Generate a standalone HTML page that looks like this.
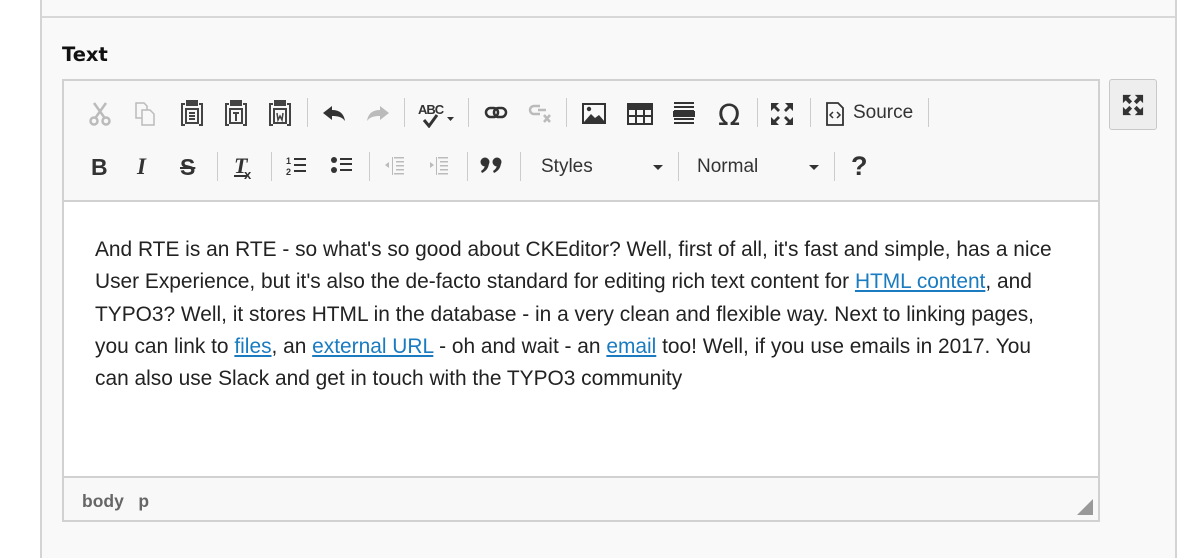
<!DOCTYPE html>
<html><head><meta charset="utf-8"><style>
*{margin:0;padding:0;box-sizing:border-box}
body{width:1200px;height:551px;overflow:hidden;background:#fff;font-family:"Liberation Sans",Arial,sans-serif;position:relative}
.panel{position:absolute;left:40px;top:-2px;width:1137px;height:560px;background:#f9f9f9;border-left:2px solid #d4d4d4;border-right:2px solid #d4d4d4}
.hl{position:absolute;left:42px;top:16px;width:1133px;height:2px;background:#d8d8d8}
.label{position:absolute;left:62px;top:43px;font-family:"DejaVu Sans",sans-serif;font-weight:bold;font-size:19.5px;color:#111}
.ed{position:absolute;left:62px;top:79px;width:1038px;height:443px;border:2px solid #d1d1d1;background:#f8f8f8}
.tb{position:absolute;left:0;top:0;width:100%;height:121px;border-bottom:2px solid #d1d1d1;background:#f8f8f8}
.content{position:absolute;left:0;top:121px;width:100%;height:276px;background:#fff;border-bottom:2px solid #d1d1d1;padding:32px 0 0 31px;font-size:20.9px;line-height:32.3px;color:#222;white-space:nowrap}
.content a{color:#1a7bc1;text-decoration:underline}
.bot{position:absolute;left:18px;top:410px;font-weight:bold;font-size:17.5px;color:#666}
.ic{position:absolute}
.sep{position:absolute;width:1px;height:29px;background:#ccc}
.t{position:absolute;font-size:19px;color:#333}
.max{position:absolute;left:1109px;top:79px;width:48px;height:51px;border:1px solid #c8c8c8;border-radius:3px;background:#eee}
</style></head><body>
<div class="panel"></div>
<div class="hl"></div>
<div class="label">Text</div>
<div class="ed">
 <div class="tb">
  <svg class="ic" style="left:24px;top:20px" width="24" height="26" viewBox="0 0 24 26" fill="none" stroke="#bbb" stroke-width="2.5"><path d="M6 2l10 14M18 2L8 16"/><circle cx="6" cy="20" r="3.5"/><circle cx="18" cy="20" r="3.5"/></svg>
  <svg class="ic" style="left:70px;top:20px" width="22" height="26" viewBox="0 0 22 26" fill="none" stroke="#bbb" stroke-width="1.5"><path d="M2 2h8l3 3v12H2z"/><path d="M8 9h8l4 4v11H8z" fill="#f8f8f8"/></svg>
  <svg class="ic" style="left:116px;top:18px" width="24" height="28" viewBox="0 0 24 28" fill="none" stroke="#444" stroke-width="2"><path d="M5 5H2v21h3M19 5h3v21h-3"/><rect x="7" y="2" width="10" height="4" fill="#444"/><rect x="6" y="10" width="12" height="14"/><path d="M9 14h6M9 17h6M9 20h6"/></svg>
  <svg class="ic" style="left:160px;top:18px" width="24" height="28" viewBox="0 0 24 28" fill="none" stroke="#444" stroke-width="2"><path d="M5 5H2v21h3M19 5h3v21h-3"/><rect x="7" y="2" width="10" height="4" fill="#444"/><rect x="6" y="10" width="12" height="14"/><path d="M9 14h6M12 14v8"/></svg>
  <svg class="ic" style="left:204px;top:18px" width="24" height="28" viewBox="0 0 24 28" fill="none" stroke="#444" stroke-width="2"><path d="M5 5H2v21h3M19 5h3v21h-3"/><rect x="7" y="2" width="10" height="4" fill="#444"/><rect x="6" y="10" width="12" height="14"/><path d="M9 14l1 7 2-4 2 4 1-7" stroke-width="1.5"/></svg>
  <div class="sep" style="left:243px;top:17px"></div>
  <svg class="ic" style="left:258px;top:24px" width="24" height="18" viewBox="0 0 24 18"><path d="M1 8l9-7v4c8 0 12 4 13 11-3-4-7-5-13-5v4z" fill="#333"/></svg>
  <svg class="ic" style="left:302px;top:24px" width="24" height="18" viewBox="0 0 24 18"><path d="M23 8l-9-7v4C6 5 2 9 1 16c3-4 7-5 13-5v4z" fill="#bbb"/></svg>
  <div class="sep" style="left:340px;top:17px"></div>
  <div class="t" style="left:354px;top:21px;font-size:13px;font-weight:bold;color:#333;letter-spacing:-1px">ABC</div>
  <svg class="ic" style="left:358px;top:33px" width="36" height="14" viewBox="0 0 36 14"><path d="M2 6l5 6 8-11" stroke="#333" stroke-width="3" fill="none"/><path d="M25 3h7l-3.5 4z" fill="#333"/></svg>
  <div class="sep" style="left:404px;top:17px"></div>
  <svg class="ic" style="left:420px;top:24px" width="24" height="16" viewBox="0 0 24 16" fill="none" stroke="#333" stroke-width="2.5"><rect x="2" y="3" width="12" height="9" rx="4.5"/><rect x="10" y="3" width="12" height="9" rx="4.5"/></svg>
  <svg class="ic" style="left:464px;top:22px" width="26" height="22" viewBox="0 0 26 22" fill="none" stroke="#bbb" stroke-width="2.5"><path d="M12 3H6a4 4 0 000 8h6M10 7h8"/><path d="M16 12l6 7M22 12l-6 7"/></svg>
  <div class="sep" style="left:502px;top:17px"></div>
  <svg class="ic" style="left:518px;top:22px" width="24" height="21" viewBox="0 0 24 21"><rect x="1" y="1" width="22" height="19" fill="none" stroke="#333" stroke-width="2"/><path d="M2 19l7-8 4 4 4-3 6 7z" fill="#333"/><circle cx="7" cy="6" r="2.2" fill="#333"/></svg>
  <svg class="ic" style="left:563px;top:22px" width="26" height="22" viewBox="0 0 26 22" fill="none" stroke="#333" stroke-width="2"><rect x="1" y="1" width="24" height="20"/><rect x="1" y="1" width="24" height="5" fill="#333"/><path d="M1 13h24M9 6v15M17 6v15"/></svg>
  <svg class="ic" style="left:608px;top:20px" width="24" height="26" viewBox="0 0 24 26" stroke="#333" stroke-width="2"><path d="M2 2h20M2 6h20M2 10h20M2 14h20M2 18h20M2 22h20"/><rect x="2" y="11" width="20" height="4" fill="#333"/></svg>
  <div class="t" style="left:654px;top:17px;font-size:29px;color:#333;font-family:'DejaVu Sans',sans-serif">Ω</div>
  <div class="sep" style="left:693px;top:17px"></div>
  <svg class="ic" style="left:706px;top:21px" width="24" height="24" viewBox="0 0 24 24" fill="#333"><path d="M1 1h8L6 4l4 4-2 2-4-4-3 3zM23 1v8l-3-3-4 4-2-2 4-4-3-3zM1 23v-8l3 3 4-4 2 2-4 4 3 3zM23 23h-8l3-3-4-4 2-2 4 4 3-3z"/></svg>
  <div class="sep" style="left:746px;top:17px"></div>
  <svg class="ic" style="left:761px;top:21px" width="20" height="24" viewBox="0 0 20 24" fill="none" stroke="#333" stroke-width="1.8"><path d="M2 1h11l5 5v17H2z"/><path d="M8 10l-3 3 3 3M12 10l3 3-3 3" stroke-width="1.5"/></svg>
  <div class="t" style="left:789px;top:21px">Source</div>
  <div class="sep" style="left:864px;top:17px"></div>
  <div class="t" style="left:27px;top:73px;font-size:23px;font-weight:bold">B</div>
  <div class="t" style="left:73px;top:73px;font-size:23px;font-weight:bold;font-style:italic;font-family:'Liberation Serif',serif">I</div>
  <div class="t" style="left:116px;top:73px;font-size:23px;font-weight:bold;text-decoration:line-through">S</div>
  <div class="sep" style="left:153px;top:71px"></div>
  <div class="t" style="left:170px;top:72px;font-size:22px;font-weight:bold;font-style:italic;font-family:'Liberation Serif',serif;text-decoration:underline">T</div>
  <div class="t" style="left:180px;top:86px;font-size:13px;font-weight:bold">x</div>
  <div class="sep" style="left:207px;top:71px"></div>
  <svg class="ic" style="left:222px;top:74px" width="22" height="22" viewBox="0 0 22 22" fill="#333"><text x="0" y="9" font-size="9" font-family="Liberation Sans" font-weight="bold">1</text><text x="0" y="20" font-size="9" font-family="Liberation Sans" font-weight="bold">2</text><rect x="8" y="3" width="12" height="2"/><rect x="8" y="9" width="12" height="2"/><rect x="8" y="15" width="12" height="2"/></svg>
  <svg class="ic" style="left:266px;top:74px" width="24" height="22" viewBox="0 0 24 22" fill="#333"><circle cx="4" cy="5" r="3"/><circle cx="4" cy="15" r="3"/><rect x="10" y="3" width="12" height="2"/><rect x="10" y="8" width="12" height="2"/><rect x="10" y="14" width="12" height="2"/></svg>
  <div class="sep" style="left:305px;top:71px"></div>
  <svg class="ic" style="left:320px;top:74px" width="22" height="22" viewBox="0 0 22 22" fill="#bbb"><rect x="10" y="2" width="10" height="1.5"/><rect x="12" y="6" width="8" height="1.5"/><rect x="12" y="10" width="8" height="1.5"/><rect x="12" y="14" width="8" height="1.5"/><rect x="10" y="18" width="10" height="1.5"/><rect x="8" y="2" width="1" height="18"/><path d="M1 10l4-3v6z"/></svg>
  <svg class="ic" style="left:364px;top:74px" width="22" height="22" viewBox="0 0 22 22" fill="#bbb"><rect x="10" y="2" width="10" height="1.5"/><rect x="12" y="6" width="8" height="1.5"/><rect x="12" y="10" width="8" height="1.5"/><rect x="12" y="14" width="8" height="1.5"/><rect x="10" y="18" width="10" height="1.5"/><rect x="8" y="2" width="1" height="18"/><path d="M6 10l-4-3v6z"/></svg>
  <div class="sep" style="left:403px;top:71px"></div>
  <svg class="ic" style="left:416px;top:75px" width="24" height="20" viewBox="0 0 24 20" fill="#333"><circle cx="5" cy="6" r="4.5"/><path d="M9 6c0 6-3 9-7 11l-1-2c3-2 4-4 4-7z"/><circle cx="17" cy="6" r="4.5"/><path d="M21 6c0 6-3 9-7 11l-1-2c3-2 4-4 4-7z"/></svg>
  <div class="sep" style="left:456px;top:71px"></div>
  <div class="t" style="left:477px;top:75px">Styles</div>
  <svg class="ic" style="left:589px;top:84px" width="10" height="6"><path d="M0 0h10L5 5z" fill="#333"/></svg>
  <div class="sep" style="left:614px;top:71px"></div>
  <div class="t" style="left:633px;top:75px">Normal</div>
  <svg class="ic" style="left:745px;top:84px" width="10" height="6"><path d="M0 0h10L5 5z" fill="#333"/></svg>
  <div class="sep" style="left:770px;top:71px"></div>
  <div class="t" style="left:787px;top:70px;font-size:27px;font-weight:bold">?</div>
 </div>
 <div class="content">And RTE is an RTE - so what's so good about CKEditor? Well, first of all, it's fast and simple, has a nice<br>User Experience, but it's also the de-facto standard for editing rich text content for <a>HTML content</a>, and<br>TYPO3? Well, it stores HTML in the database - in a very clean and flexible way. Next to linking pages,<br>you can link to <a>files</a>, an <a>external URL</a> - oh and wait - an <a>email</a> too! Well, if you use emails in 2017. You<br>can also use Slack and get in touch with the TYPO3 community</div>
 <div class="bot">body &nbsp; p</div>
 <svg class="ic" style="left:1013px;top:418px" width="16" height="16"><path d="M16 0v16H0z" fill="#999"/></svg>
</div>
<div class="max"><svg style="position:absolute;left:12px;top:14px" width="22" height="22" viewBox="0 0 24 24" fill="#333"><path d="M1 1h9L7 4l4 4-3 3-4-4-3 3zM23 1v9l-3-3-4 4-3-3 4-4-3-3zM1 23v-9l3 3 4-4 3 3-4 4 3 3zM23 23h-9l3-3-4-4 3-3 4 4 3-3z"/></svg></div>
</body></html>
